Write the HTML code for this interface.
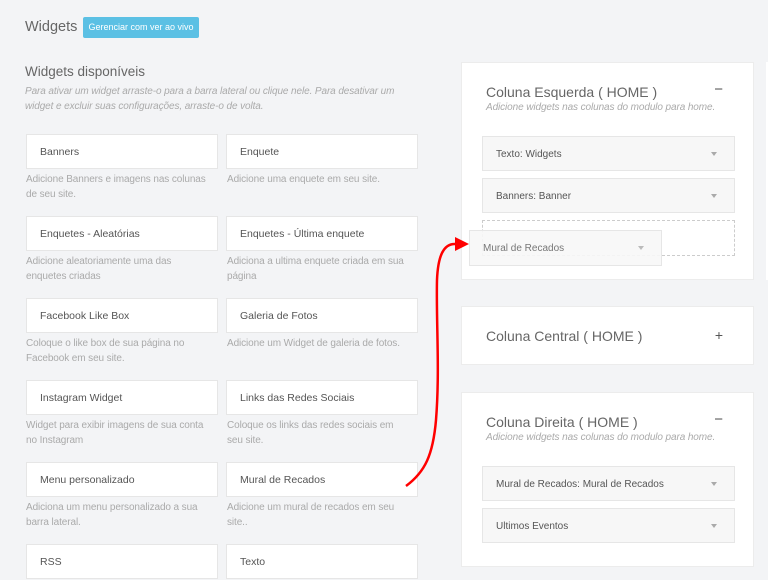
<!DOCTYPE html>
<html><head><meta charset="utf-8"><style>
*{box-sizing:border-box;margin:0;padding:0}
body{width:768px;height:580px;overflow:hidden;background:#f3f4f6;font-family:"Liberation Sans",sans-serif;color:#555;position:relative}
.a{position:absolute}
.h1{left:25px;top:19px;font-size:14.5px;color:#666}
.btn{left:83px;top:17px;width:116px;height:21px;background:#5bc0e4;border-radius:2px;color:#fff;font-size:9px;line-height:21px;text-align:center;white-space:nowrap}
.h2{left:25px;top:64px;font-size:13.5px;color:#666}
.intro{left:25px;top:84px;width:400px;font-size:10px;font-style:italic;color:#aaa;line-height:15px;letter-spacing:-0.1px}
.box{width:192px;height:35px;background:#fff;border:1px solid #e6e6e6;font-size:10.5px;color:#555;line-height:34px;padding-left:13px}
.desc{width:182px;font-size:10px;color:#aaa;line-height:15px;letter-spacing:-0.1px}
.panel{background:#fff;border:1px solid #ececec;left:461px;width:293px}
.pt{font-size:14px;color:#666;position:absolute;left:24px}
.ps{font-size:10px;font-style:italic;color:#aaa;position:absolute;left:24px;letter-spacing:-0.1px}
.sign{position:absolute;right:30px;font-size:15px;color:#555}
.item{position:absolute;left:20px;width:253px;height:35px;background:#f7f7f7;border:1px solid #e6e6e6;font-size:10px;color:#555;line-height:35px;padding-left:13px}
.item:after{content:"";position:absolute;right:17px;top:15px;border:3.5px solid transparent;border-top:4px solid #aaa}
</style></head><body>
<div class="a h1">Widgets</div>
<div class="a btn">Gerenciar com ver ao vivo</div>
<div class="a h2">Widgets disponíveis</div>
<div class="a intro">Para ativar um widget arraste-o para a barra lateral ou clique nele. Para desativar um widget e excluir suas configurações, arraste-o de volta.</div>

<div class="a box" style="left:26px;top:134px">Banners</div>
<div class="a box" style="left:226px;top:134px">Enquete</div>
<div class="a desc" style="left:26px;top:172px">Adicione Banners e imagens nas colunas de seu site.</div>
<div class="a desc" style="left:227px;top:172px">Adicione uma enquete em seu site.</div>

<div class="a box" style="left:26px;top:216px">Enquetes - Aleatórias</div>
<div class="a box" style="left:226px;top:216px">Enquetes - Última enquete</div>
<div class="a desc" style="left:26px;top:254px">Adicione aleatoriamente uma das enquetes criadas</div>
<div class="a desc" style="left:227px;top:254px">Adiciona a ultima enquete criada em sua página</div>

<div class="a box" style="left:26px;top:298px">Facebook Like Box</div>
<div class="a box" style="left:226px;top:298px">Galeria de Fotos</div>
<div class="a desc" style="left:26px;top:336px">Coloque o like box de sua página no Facebook em seu site.</div>
<div class="a desc" style="left:227px;top:336px">Adicione um Widget de galeria de fotos.</div>

<div class="a box" style="left:26px;top:380px">Instagram Widget</div>
<div class="a box" style="left:226px;top:380px">Links das Redes Sociais</div>
<div class="a desc" style="left:26px;top:418px">Widget para exibir imagens de sua conta no Instagram</div>
<div class="a desc" style="left:227px;top:418px">Coloque os links das redes sociais em seu site.</div>

<div class="a box" style="left:26px;top:462px">Menu personalizado</div>
<div class="a box" style="left:226px;top:462px">Mural de Recados</div>
<div class="a desc" style="left:26px;top:500px">Adiciona um menu personalizado a sua barra lateral.</div>
<div class="a desc" style="left:227px;top:500px">Adicione um mural de recados em seu site..</div>

<div class="a box" style="left:26px;top:544px">RSS</div>
<div class="a box" style="left:226px;top:544px">Texto</div>

<div class="a panel" style="top:62px;height:218px">
 <div class="pt" style="top:21px">Coluna Esquerda ( HOME )</div>
 <div class="sign" style="top:18px">−</div>
 <div class="ps" style="top:39px">Adicione widgets nas colunas do modulo para home.</div>
 <div class="item" style="top:73px">Texto: Widgets</div>
 <div class="item" style="top:115px">Banners: Banner</div>
 <div style="position:absolute;left:20px;top:157px;width:253px;height:36px;border:1px dashed #ccc"></div>
</div>
<div class="a" style="left:469px;top:230px;width:193px;height:36px;background:rgba(247,247,247,0.9);border:1px solid #e6e6e6;font-size:10px;color:#777;line-height:35px;padding-left:13px">Mural de Recados<span style="position:absolute;right:17px;top:15px;border:3.5px solid transparent;border-top:4px solid #bbb"></span></div>

<div class="a panel" style="top:306px;height:59px">
 <div class="pt" style="top:21px">Coluna Central ( HOME )</div>
 <div class="sign" style="top:20px;font-size:14px">+</div>
</div>
<div class="a panel" style="top:392px;height:175px">
 <div class="pt" style="top:21px">Coluna Direita ( HOME )</div>
 <div class="sign" style="top:18px">−</div>
 <div class="ps" style="top:39px">Adicione widgets nas colunas do modulo para home.</div>
 <div class="item" style="top:73px">Mural de Recados: Mural de Recados</div>
 <div class="item" style="top:115px">Ultimos Eventos</div>
</div>
<div class="a" style="left:766px;top:62px;width:2px;height:218px;background:#fff"></div>

<svg class="a" style="left:0;top:0" width="768" height="580">
 <path d="M406,486 C425,472 433,455 436,420 C440,370 436,320 437,280 C438,255 444,243 456,244" fill="none" stroke="#f00" stroke-width="2.5"/>
 <path d="M455,237 L469,244 L455,251 Z" fill="#f00"/>
</svg>
</body></html>
